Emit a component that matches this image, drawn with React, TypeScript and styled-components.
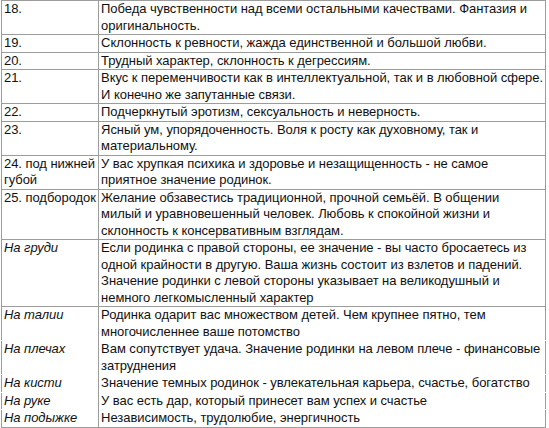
import React from 'react';
import styled, { createGlobalStyle } from 'styled-components';

const GlobalStyle = createGlobalStyle`
  html, body {
    margin: 0;
    padding: 0;
    background: #ffffff;
  }
`;

const Table = styled.table`
  border-collapse: collapse;
  border: 1px solid #9c9c9c;
  color: #111111;
  font-family: 'Liberation Sans', Arial, sans-serif;
  font-size: 13px;
  letter-spacing: -0.05px;
  line-height: 16.5px;
  margin: 0 0 0 1px;
  width: 545px;
`;

const Cell = styled.td<{ $plain?: boolean }>`
  border-top: 1px solid ${({ $plain }) => ($plain ? 'transparent' : '#9c9c9c')};
  padding: 0 2px;
  vertical-align: top;
  white-space: nowrap;
`;

const Label = styled(Cell)<{ $italic?: boolean }>`
  border-right: 1px solid #9c9c9c;
  font-style: ${({ $italic }) => ($italic ? 'italic' : 'normal')};
  width: 95px;
`;

type Entry = {
  label: string[];
  text: string[];
  italic?: boolean;
  plain?: boolean;
};

const entries: Entry[] = [
  {
    label: ['18.'],
    text: ['Победа чувственности над всеми остальными качествами. Фантазия и', 'оригинальность.'],
  },
  { label: ['19.'], text: ['Склонность к ревности, жажда единственной и большой любви.'] },
  { label: ['20.'], text: ['Трудный характер, склонность к дегрессиям.'] },
  {
    label: ['21.'],
    text: ['Вкус к переменчивости как в интеллектуальной, так и в любовной сфере.', 'И конечно же запутанные связи.'],
  },
  { label: ['22.'], text: ['Подчеркнутый эротизм, сексуальность и неверность.'] },
  {
    label: ['23.'],
    text: ['Ясный ум, упорядоченность. Воля к росту как духовному, так и', 'материальному.'],
  },
  {
    label: ['24. под нижней', 'губой'],
    text: ['У вас хрупкая психика и здоровье и незащищенность - не самое', 'приятное значение родинок.'],
  },
  {
    label: ['25. подбородок'],
    text: [
      'Желание обзавестись традиционной, прочной семьёй. В общении',
      'милый и уравновешенный человек. Любовь к спокойной жизни и',
      'склонность к консервативным взглядам.',
    ],
  },
  {
    label: ['На груди'],
    italic: true,
    text: [
      'Если родинка с правой стороны, ее значение - вы часто бросаетесь из',
      'одной крайности в другую. Ваша жизнь состоит из взлетов и падений.',
      'Значение родинки с левой стороны указывает на великодушный и',
      'немного легкомысленный характер',
    ],
  },
  {
    label: ['На талии'],
    italic: true,
    text: ['Родинка одарит вас множеством детей. Чем крупнее пятно, тем', 'многочисленнее ваше потомство'],
  },
  {
    label: ['На плечах'],
    italic: true,
    plain: true,
    text: ['Вам сопутствует удача. Значение родинки на левом плече - финансовые', 'затруднения'],
  },
  {
    label: ['На кисти'],
    italic: true,
    plain: true,
    text: ['Значение темных родинок - увлекательная карьера, счастье, богатство'],
  },
  {
    label: ['На руке'],
    italic: true,
    plain: true,
    text: ['У вас есть дар, который принесет вам успех и счастье'],
  },
  {
    label: ['На подыжке'],
    italic: true,
    plain: true,
    text: ['Независимость, трудолюбие, энергичность'],
  },
];

const Lines = ({ lines }: { lines: string[] }) => (
  <>
    {lines.map((line, i) => (
      <React.Fragment key={i}>
        {i > 0 && <br />}
        {line}
      </React.Fragment>
    ))}
  </>
);

const App = () => (
  <>
    <GlobalStyle />
    <Table>
      <tbody>
        {entries.map((entry, i) => (
          <tr key={i}>
            <Label $plain={entry.plain} $italic={entry.italic}>
              <Lines lines={entry.label} />
            </Label>
            <Cell $plain={entry.plain}>
              <Lines lines={entry.text} />
            </Cell>
          </tr>
        ))}
      </tbody>
    </Table>
  </>
);

export default App;
